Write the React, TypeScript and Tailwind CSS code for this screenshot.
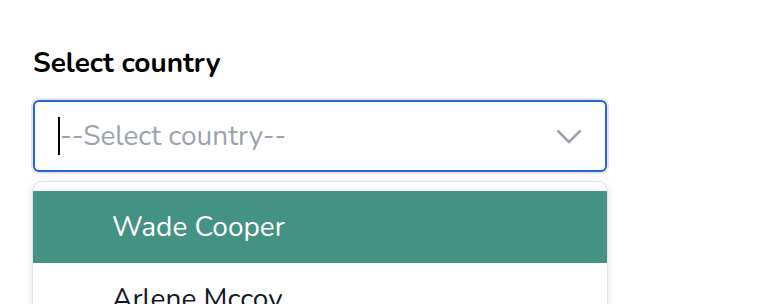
const OPTIONS = ['Wade Cooper', 'Arlene Mccoy', 'Devon Webb', 'Tom Cook']

export default function App() {
  return (
    <div className="min-h-screen bg-white px-[33px] pt-[44px]" style={{ fontFamily: '"Nunito", "Noto Sans", sans-serif' }}>
      <div className="w-[574px]">
        <label className="block text-[28px] font-bold leading-[38px] text-black">Select country</label>

        <div className="relative mt-[18px]">
          {/* Input */}
          <div className="flex h-[72px] items-center rounded-[6px] border-2 border-[#2563d6] bg-white pl-[23px] pr-[23px] shadow-[0_0_0_2px_#e5e7eb]">
            <span className="h-[38px] w-[2px] bg-black" />
            <span className="flex-1 text-[28px] leading-none text-[#9ca3af]">--Select country--</span>
            <svg width="26" height="15" viewBox="0 0 26 15" fill="none" className="text-[#9ca3af]">
              <polyline points="1.5,1.5 13,13 24.5,1.5" stroke="currentColor" strokeWidth="2.6" strokeLinejoin="round" />
            </svg>
          </div>

          {/* Dropdown */}
          <div className="-mx-[1px] mt-[9px] overflow-hidden rounded-t-[10px] border border-[#e3e3e3] bg-white pt-[9px] shadow-[0_2px_10px_rgba(0,0,0,0.10)]">
            {OPTIONS.map((o, i) => (
              <div
                key={o}
                className={`flex h-[72px] items-center pl-[79px] text-[28px] ${i === 0 ? 'bg-[#449283] text-white' : 'text-[#111827]'}`}
              >
                {o}
              </div>
            ))}
          </div>
        </div>
      </div>
    </div>
  )
}
